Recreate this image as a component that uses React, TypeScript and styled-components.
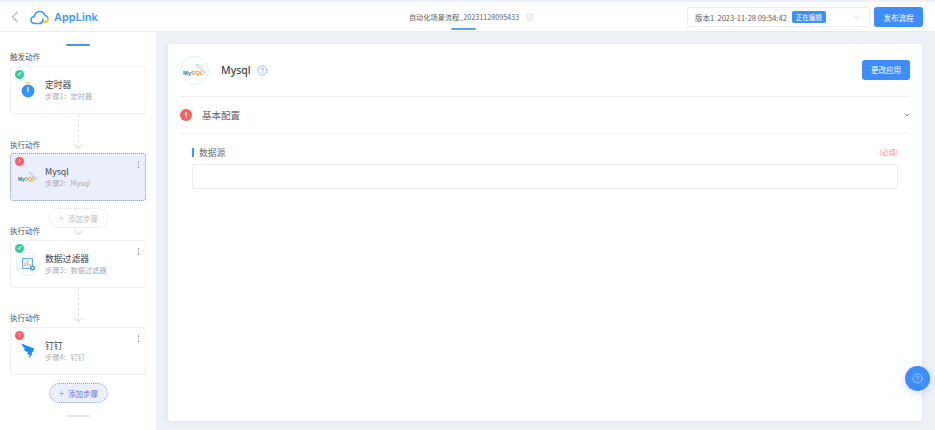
import styled, { createGlobalStyle } from 'styled-components'
import { ChevronDown, ChevronLeft, CircleHelp, Plus, SquarePen } from 'lucide-react'

const GlobalStyle = createGlobalStyle`
  html, body {
    margin: 0;
    padding: 0;
    width: 935px;
    height: 430px;
    overflow: hidden;
    background: #eef1f8;
    font-family: 'Noto Sans CJK SC', 'Liberation Sans', sans-serif;
    color: #4a4f5a;
  }
  * { box-sizing: border-box; }
`

const Page = styled.div`
  width: 935px;
  height: 430px;
  display: flex;
  flex-direction: column;
  position: relative;
`

const Header = styled.header`
  height: 30px;
  margin-top: 2px;
  flex: none;
  background: #fff;
  display: grid;
  grid-template-columns: 1fr auto 1fr;
  align-items: center;
  padding: 0 12px 0 5px;
  border-bottom: 1px solid #e9ecf3;
`

const Brand = styled.div`
  display: flex;
  align-items: center;
  gap: 5px;
  color: #b4b7bd;
`

const BrandName = styled.span`
  display: flex;
  align-items: center;
  gap: 4px;
  font-family: 'Inter', 'Liberation Sans', sans-serif;
  font-size: 11px;
  font-weight: 600;
  color: #3f9bf3;
`

const FlowTitle = styled.div`
  height: 30px;
  display: flex;
  align-items: center;
  font-size: 7.2px;
  color: #5c6068;
  position: relative;
  svg {
    position: absolute;
    left: calc(100% + 7px);
    top: 11px;
    color: #b9bcc3;
  }
  &::after {
    content: '';
    position: absolute;
    left: 42px;
    bottom: 2px;
    width: 25px;
    height: 2px;
    border-radius: 1px;
    background: #5aa2f6;
  }
`

const HeaderRight = styled.div`
  display: flex;
  justify-content: flex-end;
  align-items: center;
  gap: 4px;
`

const VersionSelect = styled.div`
  width: 183px;
  height: 20px;
  border: 1px solid #eceef3;
  border-radius: 3px;
  display: flex;
  align-items: center;
  padding: 0 7px;
  gap: 5px;
  font-size: 7.5px;
  color: #5c6068;
  white-space: pre;
  svg {
    margin-left: auto;
    color: #c6c9cf;
  }
`

const EditingTag = styled.span`
  background: #3f8ff7;
  color: #fff;
  font-size: 6.5px;
  border-radius: 2px;
  width: 34px;
  height: 12px;
  display: flex;
  align-items: center;
  justify-content: center;
`

const PrimaryButton = styled.button`
  width: 49px;
  height: 20px;
  border: none;
  border-radius: 3px;
  background: #3f8cff;
  color: #fff;
  font-family: inherit;
  font-size: 7.5px;
  padding: 0;
  display: flex;
  align-items: center;
  justify-content: center;
`

const Body = styled.div`
  flex: 1;
  display: flex;
  min-height: 0;
`

const Sidebar = styled.aside`
  width: 156px;
  flex: none;
  background: #fff;
  padding: 12px 10px 0;
  display: flex;
  flex-direction: column;
  align-items: stretch;
`

const ScrollMark = styled.div<{ $muted?: boolean }>`
  width: 24px;
  height: 2px;
  border-radius: 1px;
  align-self: center;
  flex: none;
  margin-bottom: ${(p) => (p.$muted ? 0 : 5)}px;
  background: ${(p) => (p.$muted ? '#e4e6ea' : '#4a90f0')};
`

const StepLabel = styled.div`
  font-size: 7.5px;
  line-height: 11px;
  height: 11px;
  color: #55585f;
  position: relative;
`

const StepCard = styled.div<{ $active?: boolean }>`
  height: 48px;
  flex: none;
  margin-top: ${(p) => (p.$active ? '3px' : '4px')};
  border-radius: 3px;
  border: 1px ${(p) => (p.$active ? 'dotted #7f93ea' : 'solid #eff1f5')};
  background: ${(p) => (p.$active ? '#ebeffc' : '#fff')};
  display: flex;
  align-items: center;
  padding: 0 0 0 5px;
  position: relative;
`

const StatusDot = styled.span<{ $ok?: boolean }>`
  position: absolute;
  left: 4px;
  top: 3px;
  width: 9px;
  height: 9px;
  border-radius: 50%;
  background: ${(p) => (p.$ok ? '#2fcf9f' : '#fb5f5f')};
  color: #fff;
  font-size: 6px;
  line-height: 9px;
  text-align: center;
  font-weight: 700;
  font-family: 'Liberation Sans', sans-serif;
`

const StepIcon = styled.div`
  width: 24px;
  height: 24px;
  margin-right: 5px;
  flex: none;
  display: flex;
  align-items: center;
  justify-content: center;
`

const StepText = styled.div`
  display: flex;
  flex-direction: column;
  padding-bottom: 2px;
`

const StepName = styled.div`
  font-size: 8.8px;
  line-height: 13px;
  color: #3f434b;
`

const StepSub = styled.div`
  font-size: 7.2px;
  line-height: 10px;
  color: #a9acb3;
`

const MoreDots = styled.span`
  position: absolute;
  right: 6px;
  top: 7px;
  display: flex;
  flex-direction: column;
  gap: 1px;
  i {
    width: 1.5px;
    height: 1.5px;
    border-radius: 50%;
    background: #8b8e95;
  }
`

const Connector = styled.div<{ $height: number }>`
  height: ${(p) => p.$height}px;
  flex: none;
  position: relative;
  &::before {
    content: '';
    position: absolute;
    left: 50%;
    top: 0;
    bottom: -9px;
    border-left: 1px dashed #dfe1e6;
  }
  &::after {
    content: '';
    position: absolute;
    left: calc(50% - 3px);
    bottom: -9px;
    width: 6px;
    height: 6px;
    border-right: 1px solid #dfe1e6;
    border-bottom: 1px solid #dfe1e6;
    transform: rotate(45deg);
  }
`

const AddStep = styled.button<{ $primary?: boolean }>`
  width: 59px;
  height: 20px;
  flex: none;
  border-radius: 10px;
  border: 1px dotted ${(p) => (p.$primary ? '#8a9fec' : '#e2e3e7')};
  background: ${(p) => (p.$primary ? '#ebeffc' : '#fff')};
  color: ${(p) => (p.$primary ? '#5c78d8' : '#b9bbc0')};
  font-family: inherit;
  font-size: 7.5px;
  padding: 0;
  display: flex;
  align-items: center;
  justify-content: center;
  gap: 3px;
  position: relative;
  z-index: 1;
`

const Main = styled.main`
  flex: 1;
  min-width: 0;
  padding: 12px 13px 9px 12px;
`

const Panel = styled.section`
  height: 100%;
  background: #fff;
  border-radius: 3px;
  box-shadow: 0 1px 6px rgba(60, 70, 110, 0.08);
  padding: 0 12px;
  display: flex;
  flex-direction: column;
`

const PanelHead = styled.div`
  height: 53px;
  flex: none;
  display: flex;
  align-items: center;
  border-bottom: 1px solid #eff1f4;
`

const AppLogo = styled.div`
  width: 29px;
  height: 29px;
  border: 1px solid #e3effa;
  border-radius: 50%;
  display: flex;
  align-items: center;
  justify-content: center;
  margin-right: 12px;
`

const AppName = styled.span`
  font-family: 'Noto Sans', 'Liberation Sans', sans-serif;
  font-size: 10.5px;
  font-weight: 500;
  color: #3f434b;
  margin-right: 6px;
`

const HelpMark = styled.span`
  color: #4a94f5;
  display: flex;
`

const ApplyButton = styled(PrimaryButton)`
  width: 48px;
  margin-left: auto;
  margin-top: -1px;
`

const ConfigRow = styled.div`
  height: 37px;
  flex: none;
  display: flex;
  align-items: center;
  border-bottom: 1px solid #eff1f4;
  color: #5c6068;
  font-size: 9.5px;
  svg {
    margin-left: auto;
    margin-right: -1px;
    color: #55585f;
  }
`

const AlertDot = styled.span`
  width: 12px;
  height: 12px;
  border-radius: 50%;
  background: #fb5f5f;
  color: #fff;
  font-family: 'Liberation Sans', sans-serif;
  font-size: 9px;
  font-weight: 700;
  line-height: 12px;
  text-align: center;
  margin-right: 10px;
`

const Field = styled.div`
  padding: 12px 12px 0;
`

const FieldHead = styled.div`
  display: flex;
  align-items: center;
  justify-content: space-between;
  height: 12px;
`

const FieldName = styled.span`
  border-left: 2px solid #4a90f0;
  padding-left: 5px;
  height: 9px;
  font-size: 8.8px;
  line-height: 9px;
  color: #6a6e76;
`

const Required = styled.span`
  font-size: 7px;
  color: #f88;
`

const FieldInput = styled.div`
  height: 25px;
  margin-top: 6px;
  border: 1px solid #eceef3;
  border-radius: 3px;
`

const FloatHelp = styled.div`
  position: absolute;
  right: 5px;
  top: 366px;
  width: 25px;
  height: 25px;
  border-radius: 50%;
  background: #3f8cff;
  color: #d8e7ff;
  display: flex;
  align-items: center;
  justify-content: center;
  box-shadow: 0 2px 10px rgba(63, 140, 255, 0.25);
`

const LogoText = styled.text`
  font-family: 'Liberation Sans', sans-serif;
  font-weight: 700;
`

const AddRow = styled.div<{ $top: number; $bottom: number }>`
  display: flex;
  justify-content: center;
  flex: none;
  margin-top: ${(p) => p.$top}px;
  margin-bottom: ${(p) => p.$bottom}px;
`

const CloudLogo = () => (
  <svg width="20" height="15" viewBox="0 0 20 15">
    <path d="M10 11 C15 12 18 9 19 7 C20 10 18 13 14 13.5 L9 13.5 Z" fill="#f8c93e" />
    <path
      d="M5 13.5 C2.5 13.5 1 12 1 10 C1 8 2.5 6.8 4.2 6.8 C4.8 3.4 7.2 1.4 9.8 1.4 C12.6 1.4 14.4 3.4 15 5.6 C16.6 5.8 17.6 6.8 17.8 8"
      fill="none"
      stroke="#3f9bf3"
      strokeWidth="1.5"
      strokeLinecap="round"
    />
    <path d="M5 13.5 L11 13.5 C12.5 12.5 13 11 13 9" fill="none" stroke="#3f9bf3" strokeWidth="1.5" strokeLinecap="round" />
  </svg>
)

const TimerIcon = () => (
  <svg width="14" height="16" viewBox="0 0 14 16">
    <rect x="5" y="0" width="4" height="1.4" fill="#f8d26a" />
    <circle cx="7" cy="9" r="6.4" fill="#2f96f7" />
    <path d="M7 5.5 V9.5" stroke="#fff" strokeWidth="1.2" strokeLinecap="round" />
  </svg>
)

const MysqlLogo = ({ size }: { size: number }) => (
  <svg width={size} height={size * 0.62} viewBox="0 0 26 16">
    <path
      d="M14 2 C17 1 18.5 3 20 5.5 C21 7.5 22.5 9 24.5 10.5 C22 10 20 8.5 18.5 6.5 C17.5 4.5 16 3 14 2 Z"
      fill="none"
      stroke="#86a6bd"
      strokeWidth="0.6"
    />
    <LogoText x="0" y="13" fontSize="6.5" fill="#2a7da6">
      My
    </LogoText>
    <LogoText x="9" y="13" fontSize="6.5" fill="#e39a3c">
      SQL
    </LogoText>
  </svg>
)

const FilterIcon = () => (
  <svg width="24" height="24" viewBox="0 0 24 24">
    <circle cx="12" cy="12" r="11.5" fill="#fff" stroke="#d8eafc" strokeWidth="0.8" />
    <rect x="6.5" y="6.5" width="10" height="10" fill="#eaf4fd" stroke="#4a9bea" strokeWidth="0.8" />
    <path d="M9 14 V11 M11.5 14 V9 M14 14 V12" stroke="#f2b53c" strokeWidth="1.2" />
    <circle cx="16.5" cy="16" r="2.6" fill="#4a9bea" />
    <circle cx="16.5" cy="16" r="1" fill="#fff" />
  </svg>
)

const DingIcon = () => (
  <svg width="14" height="16" viewBox="0 0 14 16">
    <path
      d="M0.5 0.5 C4 2.5 9 3.5 13 5.5 C13 7.5 12 9 10.5 10.5 L11.5 10.5 L8 15.5 L8.5 11.5 L6 11 L7 9 C4.5 8.5 3 7 2.5 5.5 L4.5 6 C2.5 4.5 1 2.5 0.5 0.5 Z"
      fill="#1b8cf2"
    />
  </svg>
)

const steps = [
  { label: '触发动作', name: '定时器', sub: '步骤1：定时器', ok: true, icon: <TimerIcon />, menu: false, active: false, gap: 25, addAfter: false },
  { label: '执行动作', name: 'Mysql', sub: '步骤2：Mysql', ok: false, icon: <MysqlLogo size={20} />, menu: true, active: true, gap: 0, addAfter: true },
  { label: '执行动作', name: '数据过滤器', sub: '步骤3：数据过滤器', ok: true, icon: <FilterIcon />, menu: true, active: false, gap: 24, addAfter: false },
  { label: '执行动作', name: '钉钉', sub: '步骤4：钉钉', ok: false, icon: <DingIcon />, menu: true, active: false, gap: 0, addAfter: false }
]

const App = () => {
  return (
    <Page>
      <GlobalStyle />
      <Header>
        <Brand>
          <ChevronLeft size={20} strokeWidth={1.3} />
          <BrandName>
            <CloudLogo />
            AppLink
          </BrandName>
        </Brand>
        <FlowTitle>
          自动化场景流程_20231128095433
          <SquarePen size={8} strokeWidth={1.4} />
        </FlowTitle>
        <HeaderRight>
          <VersionSelect>
            版本1  2023-11-28 09:54:42
            <EditingTag>正在编辑</EditingTag>
            <ChevronDown size={10} strokeWidth={1.4} />
          </VersionSelect>
          <PrimaryButton>发布流程</PrimaryButton>
        </HeaderRight>
      </Header>
      <Body>
        <Sidebar>
          <ScrollMark />
          {steps.map((step) => (
            <div key={step.sub}>
              <StepLabel>{step.label}</StepLabel>
              <StepCard $active={step.active}>
                <StatusDot $ok={step.ok}>{step.ok ? '✓' : '!'}</StatusDot>
                <StepIcon>{step.icon}</StepIcon>
                <StepText>
                  <StepName>{step.name}</StepName>
                  <StepSub>{step.sub}</StepSub>
                </StepText>
                {step.menu && (
                  <MoreDots>
                    <i />
                    <i />
                    <i />
                  </MoreDots>
                )}
              </StepCard>
              {step.gap > 0 && <Connector $height={step.gap} />}
              {step.addAfter && (
                <>
                  <AddRow $top={7} $bottom={-3}>
                    <AddStep>
                      <Plus size={7} strokeWidth={1.4} />
                      添加步骤
                    </AddStep>
                  </AddRow>
                  <Connector $height={0} />
                </>
              )}
            </div>
          ))}
          <AddRow $top={8} $bottom={12}>
            <AddStep $primary>
              <Plus size={7} strokeWidth={1.6} />
              添加步骤
            </AddStep>
          </AddRow>
          <ScrollMark $muted />
        </Sidebar>
        <Main>
          <Panel>
            <PanelHead>
              <AppLogo>
                <MysqlLogo size={24} />
              </AppLogo>
              <AppName>Mysql</AppName>
              <HelpMark>
                <CircleHelp size={11} strokeWidth={1.3} />
              </HelpMark>
              <ApplyButton>更改应用</ApplyButton>
            </PanelHead>
            <ConfigRow>
              <AlertDot>!</AlertDot>
              基本配置
              <ChevronDown size={8} strokeWidth={2} />
            </ConfigRow>
            <Field>
              <FieldHead>
                <FieldName>数据源</FieldName>
                <Required>(必填)</Required>
              </FieldHead>
              <FieldInput />
            </Field>
          </Panel>
        </Main>
      </Body>
      <FloatHelp>
        <CircleHelp size={11} strokeWidth={1.3} />
      </FloatHelp>
    </Page>
  )
}

export default App
